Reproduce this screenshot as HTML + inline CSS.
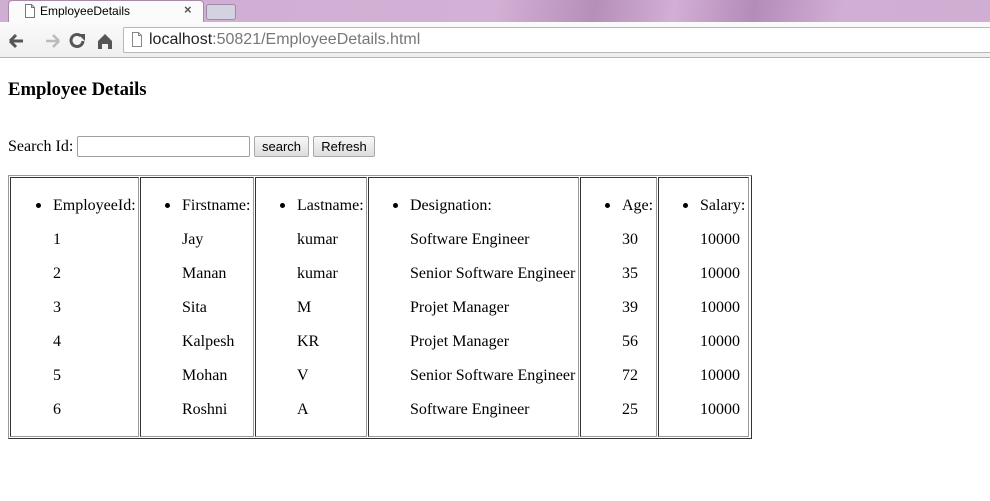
<!DOCTYPE html>
<html><head><meta charset="utf-8"><style>
*{margin:0;padding:0;box-sizing:border-box}
body{width:990px;height:501px;background:#fff;position:relative;overflow:hidden;font-family:"Liberation Serif",serif;font-size:16px;color:#000}
.a{position:absolute}
.tabbar{left:0;top:0;width:990px;height:22px;background:linear-gradient(100deg,#cfaed3 0%,#d3b0d5 50%,#b58fb8 60%,#d2afd4 68%,#b48cb8 76%,#d1afd4 85%,#d0add2 100%)}
.tab{left:8px;top:0;width:196px;height:23px;background:#fbfbfb;border:1px solid #a68aa8;border-bottom:none;border-radius:4px 4px 0 0}
.tab2{left:206px;top:4px;width:30px;height:16px;background:#d4d2e0;border:1px solid #9e8aa8;border-radius:3px}
.toolbar{left:0;top:22px;width:990px;height:36px;background:linear-gradient(#fafafa,#efefef);border-bottom:1px solid #b5b5b5}
.omni{left:123px;top:27px;width:870px;height:26px;background:#fff;border:1px solid #b8b8b8;border-radius:2px}
.cell{position:absolute;top:177px;height:260px;border:1px solid;border-color:#333 #999 #999 #333}
.t{position:absolute;white-space:nowrap;line-height:17px}
.bul{position:absolute;width:5px;height:5px;border-radius:50%;background:#000}
button{position:absolute;font-family:"Liberation Sans",sans-serif;font-size:13px;background:linear-gradient(#f8f8f8,#dddddd);border:1px solid #a9a9a9;border-radius:2px;height:21px;color:#000}
</style></head><body>
<div class="a tabbar"></div>
<div class="a tab"></div>
<svg class="a" style="left:24px;top:4px" width="12" height="14"><path d="M1.5 .5h6l3 3v10h-9z M7.5 .5v3h3" fill="#fff" stroke="#777"/></svg>
<div class="a" style="left:40px;top:4px;font:12px 'Liberation Sans',sans-serif">EmployeeDetails</div>
<div class="a" style="left:184px;top:2px;font:bold 13px 'Liberation Sans',sans-serif;color:#555">×</div>
<div class="a tab2"></div>
<div class="a toolbar"></div>
<svg class="a" style="left:8px;top:32px" width="105" height="18">
<path d="M2 9h13M2 9l6-6M2 9l6 6" stroke="#555" stroke-width="3" fill="none"/>
<path d="M38 9h13M51 9l-6-6M51 9l-6 6" stroke="#bbb" stroke-width="2.5" fill="none"/>
<path d="M73 4a6 6 0 1 0 2 5" stroke="#555" stroke-width="3" fill="none"/><path d="M70 2h7v7z" fill="#555"/>
<path d="M90 9l7-7 7 7v8h-4v-5h-6v5h-4z" fill="#555"/>
</svg>
<div class="a omni"></div>
<svg class="a" style="left:131px;top:32px" width="12" height="15"><path d="M1.5 .5h6l3 3v11h-9z M7.5 .5v3h3" fill="#fff" stroke="#888"/></svg>
<div class="a" style="left:149px;top:31px;font:16px 'Liberation Sans',sans-serif;color:#777"><span style="color:#222">localhost</span>:50821/EmployeeDetails.html</div>

<div class="a" style="left:8px;top:79px;font-weight:bold;font-size:18.7px">Employee Details</div>
<div class="a" style="left:8px;top:138px">Search Id:</div>
<div class="a" style="left:77px;top:136px;width:173px;height:21px;border:1px solid #a0a0a0;border-radius:2px"></div>
<button style="left:254px;top:136px;width:55px">search</button>
<button style="left:313px;top:136px;width:62px">Refresh</button>

<div class="a" style="left:8px;top:175px;width:744px;height:264px;border:1px solid;border-color:#999 #333 #333 #999"></div>

<div class="cell" style="left:10px;width:129px"></div>
<div class="cell" style="left:140px;width:114px"></div>
<div class="cell" style="left:255px;width:112px"></div>
<div class="cell" style="left:368px;width:211px"></div>
<div class="cell" style="left:580px;width:77px"></div>
<div class="cell" style="left:658px;width:91px"></div>

<div class="bul" style="left:36px;top:203px"></div>
<div class="bul" style="left:165px;top:203px"></div>
<div class="bul" style="left:280px;top:203px"></div>
<div class="bul" style="left:393px;top:203px"></div>
<div class="bul" style="left:605px;top:203px"></div>
<div class="bul" style="left:683px;top:203px"></div>

<div class="t" style="left:53px;top:197px">EmployeeId:<br><br>1<br><br>2<br><br>3<br><br>4<br><br>5<br><br>6</div>
<div class="t" style="left:182px;top:197px">Firstname:<br><br>Jay<br><br>Manan<br><br>Sita<br><br>Kalpesh<br><br>Mohan<br><br>Roshni</div>
<div class="t" style="left:297px;top:197px">Lastname:<br><br>kumar<br><br>kumar<br><br>M<br><br>KR<br><br>V<br><br>A</div>
<div class="t" style="left:410px;top:197px">Designation:<br><br>Software Engineer<br><br>Senior Software Engineer<br><br>Projet Manager<br><br>Projet Manager<br><br>Senior Software Engineer<br><br>Software Engineer</div>
<div class="t" style="left:622px;top:197px">Age:<br><br>30<br><br>35<br><br>39<br><br>56<br><br>72<br><br>25</div>
<div class="t" style="left:700px;top:197px">Salary:<br><br>10000<br><br>10000<br><br>10000<br><br>10000<br><br>10000<br><br>10000</div>
</body></html>
